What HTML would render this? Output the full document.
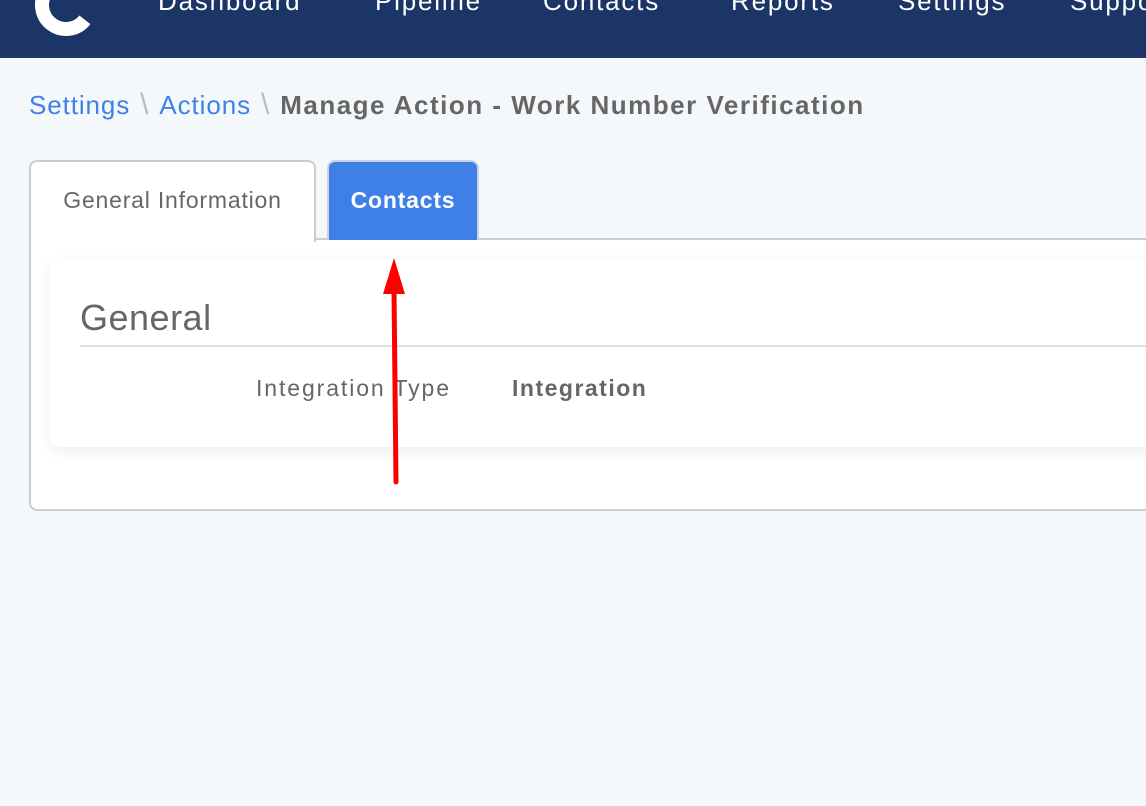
<!DOCTYPE html>
<html><head><style>
*{margin:0;padding:0;box-sizing:border-box}
body{width:1146px;height:806px;overflow:hidden;background:#f5f8fb;font-family:"Liberation Sans",sans-serif;position:relative;color:#666}
.nav{position:absolute;left:0;top:0;width:1146px;height:58px;background:#1a3566}
.nav span{position:absolute;top:-14px;color:#fff;font-size:26px;letter-spacing:1.8px;white-space:nowrap}
.bc{position:absolute;top:88px;left:29px;font-size:26px;letter-spacing:0.9px;white-space:nowrap}
.bc a{color:#3f80e8;text-decoration:none}
.bc .s{color:#bbb;margin:0 10px;font-size:30px}
.bc b{color:#666;letter-spacing:1.5px}
.tab{position:absolute;top:160px;height:80px;border:2px solid #ccc;border-bottom:none;border-radius:8px 8px 0 0;font-size:23px;letter-spacing:0.8px;text-align:center;line-height:76px}
.panel{position:absolute;left:29px;top:238px;width:1140px;height:273px;border:2px solid #ccc;border-radius:0 0 0 8px;background:#fff}
.card{position:absolute;left:50px;top:260px;width:1110px;height:187px;background:#fff;border-radius:10px;box-shadow:0 4px 14px rgba(0,0,0,.07)}
</style></head><body>
<div class="nav">
<svg style="position:absolute;left:0;top:0" width="140" height="58"><circle cx="66" cy="5" r="24" fill="none" stroke="#fff" stroke-width="14" stroke-dasharray="117 34" transform="rotate(38 66 5)"/></svg>
<span style="left:158px">Dashboard</span>
<span style="left:375px">Pipeline</span>
<span style="left:543px">Contacts</span>
<span style="left:731px">Reports</span>
<span style="left:898px">Settings</span>
<span style="left:1070px">Support</span>
</div>
<div class="bc"><a>Settings</a><span class="s">\</span><a>Actions</a><span class="s">\</span><b>Manage Action - Work Number Verification</b></div>
<div class="panel"></div>
<div class="tab" style="left:29px;width:287px;background:#fff;color:#666;height:82px;z-index:2">General Information</div>
<div class="tab" style="left:327px;width:152px;background:#3f80e8;color:#fff;font-weight:bold;border-color:#c8d4e4">Contacts</div>
<div class="card">
<div style="position:absolute;left:30px;top:37px;font-size:36px;letter-spacing:0.5px;color:#666">General</div>
<div style="position:absolute;left:30px;top:85px;width:1080px;height:2px;background:#ddd"></div>
<div style="position:absolute;left:206px;top:115px;font-size:23px;letter-spacing:1.9px">Integration Type</div>
<div style="position:absolute;left:462px;top:115px;font-size:23px;letter-spacing:1.5px;font-weight:bold">Integration</div>
</div>
<svg style="position:absolute;left:0;top:0" width="1146" height="806"><line x1="396" y1="482" x2="394" y2="290" stroke="#f00" stroke-width="5" stroke-linecap="round"/><polygon points="394,258 383,294 405,294" fill="#f00"/></svg>
</body></html>
